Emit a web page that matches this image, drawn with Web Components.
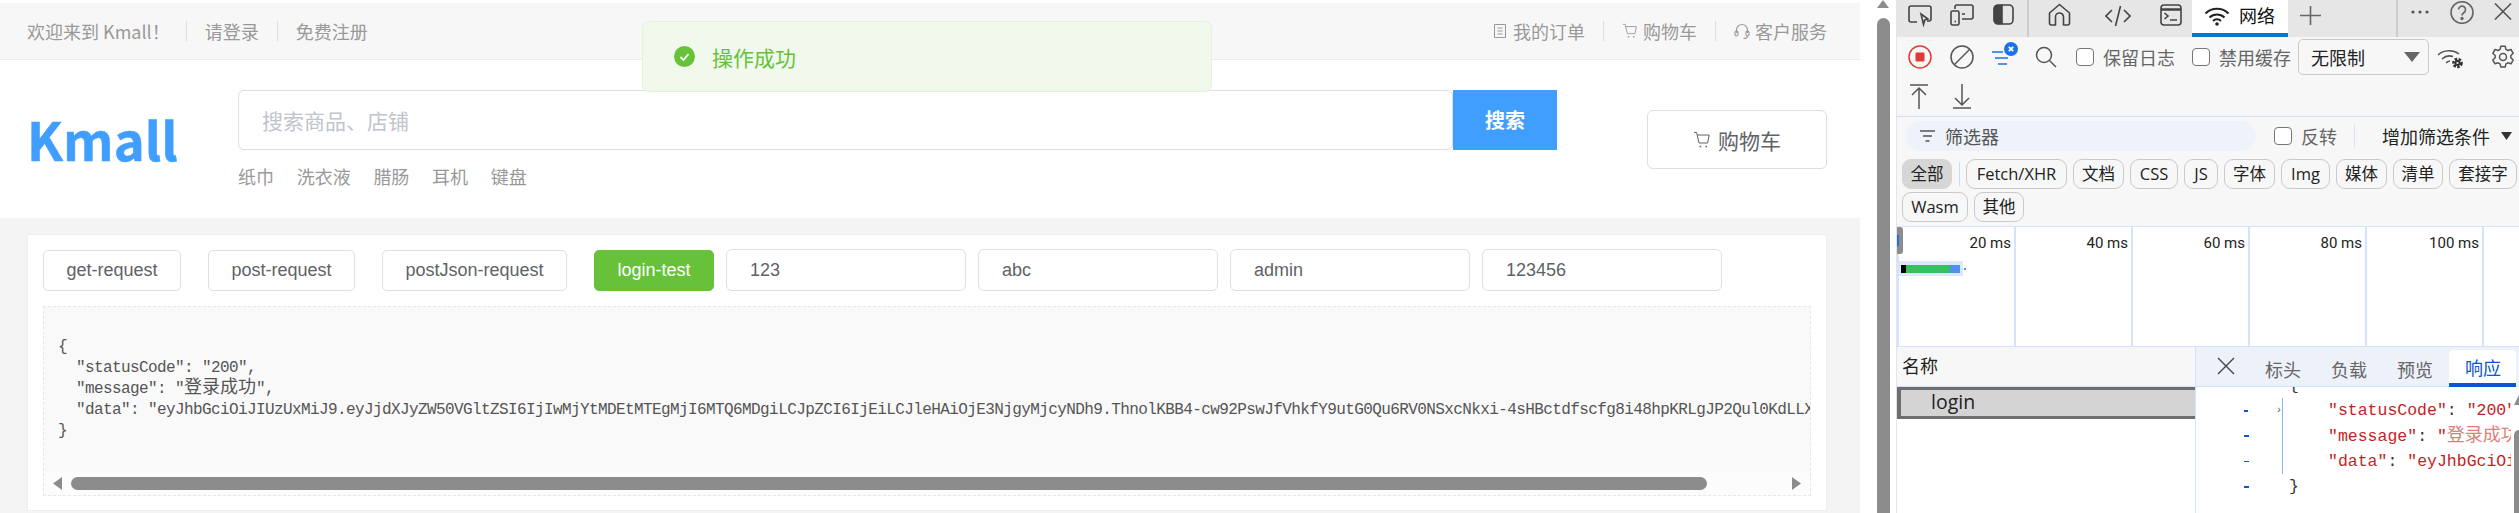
<!DOCTYPE html>
<html lang="zh">
<head>
<meta charset="utf-8">
<title>Kmall</title>
<style>
    html, body { margin: 0; height: 513px; overflow: hidden; background: #fff; }
    body { display: flex; font-family: "Noto Sans CJK SC", sans-serif; }
</style>
</head>
<body>
<mall-page>
    <mall-topbar></mall-topbar>
    <mall-header></mall-header>
    <api-panel></api-panel>
    <toast-message>操作成功</toast-message>
</mall-page>
<page-scrollbar></page-scrollbar>
<dev-tools>
    <dt-tabs></dt-tabs>
    <dt-toolbar></dt-toolbar>
    <dt-filter></dt-filter>
    <dt-timeline></dt-timeline>
    <dt-requests></dt-requests>
</dev-tools>

<script>
const CART = (w, h, c) => `<svg width="${w}" height="${h}" viewBox="0 0 18 18" fill="none" stroke="${c}" stroke-width="1"><path d="M1 1.5h2.6l2.4 10.5h8.6l1.6-8H4.2"/><path d="M6.6 15.5h1.6M12.4 15.5h1.6" stroke-width="1.6"/></svg>`;

class MallPage extends HTMLElement {
    constructor() {
        super();
        this.attachShadow({ mode: 'open' });
        this.shadowRoot.innerHTML = `
            <style>
                :host { display: flex; flex-direction: column; width: 1860px; height: 513px; position: relative; flex: none; padding-top: 3px; box-sizing: border-box; }
            </style>
            <slot></slot>
        `;
    }
}

class MallTopbar extends HTMLElement {
    constructor() {
        super();
        this.attachShadow({ mode: 'open' });
        this.shadowRoot.innerHTML = `
            <style>
                :host { display: flex; align-items: center; justify-content: space-between; height: 56px; padding: 0 33px 0 27px; background: #f7f7f7; border-bottom: 1px solid #ececec; color: #999; font-size: 18px; flex: none; }
                .group { display: flex; align-items: center; }
                .sep { width: 1px; height: 20px; background: #dcdcdc; margin: 0 18px; }
                .welcome { margin-right: -2px; }
                .item { display: flex; align-items: center; gap: 5px; }
                svg { display: block; }
            </style>
            <div class="group">
                <span class="welcome">欢迎来到 Kmall！</span>
                <i class="sep"></i><span>请登录</span>
                <i class="sep"></i><span>免费注册</span>
            </div>
            <div class="group">
                <span class="item">
                    <svg width="16" height="16" viewBox="0 0 16 16" fill="none" stroke="#999"><path d="M2.5 1.5h11v13h-11z"/><path d="M5.5 5h5M5.5 8h5M5.5 11h5"/></svg>
                    我的订单
                </span>
                <i class="sep"></i>
                <span class="item">${CART(16, 16, '#999')}购物车</span>
                <i class="sep"></i>
                <span class="item">
                    <svg width="16" height="17" viewBox="0 0 16 17" fill="none" stroke="#999" stroke-width="1.2"><path d="M2.5 10V7a5.5 5.5 0 0 1 11 0v3"/><rect x="1" y="8" width="3" height="5" rx="1.5"/><rect x="12" y="8" width="3" height="5" rx="1.5"/><path d="M13.5 13c0 1.5-2 2.5-4 2.5"/></svg>
                    客户服务
                </span>
            </div>
        `;
    }
}

class MallHeader extends HTMLElement {
    constructor() {
        super();
        this.attachShadow({ mode: 'open' });
        this.shadowRoot.innerHTML = `
            <style>
                :host { display: flex; align-items: flex-start; height: 158px; box-sizing: border-box; padding: 30px 33px 0 27px; background: #fff; flex: none; }
                .logo { width: 211px; font-size: 52.500px; font-weight: 700; -webkit-text-stroke: .5px #409eff; line-height: 60px; color: #409eff; padding-top: 18px; flex: none; }
                .search { width: 1319px; flex: none; }
                .box { display: flex; height: 60px; }
                .input { flex: 1; box-sizing: border-box; border: 1px solid #dcdfe6; border-radius: 6px; padding-left: 23px; font-size: 21px; line-height: 58px; color: #c0c4cc; }
                .go { width: 104px; background: #409eff; color: #fff; font-size: 20px; font-weight: 700; line-height: 60px; text-align: center; }
                .hot { display: flex; gap: 22.700px; margin-top: 13px; font-size: 18px; line-height: 26px; color: #999; }
                .cart { display: flex; align-items: center; justify-content: center; gap: 7px; width: 180px; height: 59px; box-sizing: border-box; margin: 20px 0 0 auto; border: 1px solid #dcdfe6; border-radius: 6px; color: #606266; font-size: 21px; }
            </style>
            <div class="logo">Kmall</div>
            <div class="search">
                <div class="box">
                    <div class="input">搜索商品、店铺</div>
                    <div class="go">搜索</div>
                </div>
                <div class="hot"><span>纸巾</span><span>洗衣液</span><span>腊肠</span><span>耳机</span><span>键盘</span></div>
            </div>
            <div class="cart">${CART(18, 18, '#606266')}<span>购物车</span></div>
        `;
    }
}

class ApiPanel extends HTMLElement {
    constructor() {
        super();
        this.attachShadow({ mode: 'open' });
        const token = 'eyJhbGciOiJIUzUxMiJ9.eyJjdXJyZW50VGltZSI6IjIwMjYtMDEtMTEgMjI6MTQ6MDgiLCJpZCI6IjEiLCJleHAiOjE3NjgyMjcyNDh9.ThnolKBB4-cw92PswJfVhkfY9utG0Qu6RV0NSxcNkxi-4sHBctdfscfg8i48hpKRLgJP2Qul0KdLLX';
        this.shadowRoot.innerHTML = `
            <style>
                :host { display: block; flex: 1; background: #f4f4f4; padding: 16px 33px 0 27px; }
                .card { box-sizing: border-box; height: 277px; padding: 14px 15px; background: #fff; border: 1px solid #eee; font-family: "Liberation Sans", "Noto Sans CJK SC", sans-serif; font-size: 18px; }
                .row { display: flex; align-items: center; height: 42px; }
                .btn { box-sizing: border-box; height: 41px; line-height: 39px; border: 1px solid #dcdfe6; border-radius: 5px; color: #606266; text-align: center; margin-right: 27px; }
                .btn.ok { background: #67c23a; border-color: #67c23a; color: #fff; margin-right: 12px; }
                .field { box-sizing: border-box; width: 240px; height: 42px; line-height: 40px; border: 1px solid #dcdfe6; border-radius: 6px; color: #606266; padding-left: 23px; margin-right: 12px; }
                .result { display: flex; flex-direction: column; box-sizing: border-box; height: 190px; margin-top: 15px; border: 1px dashed #e8e8e8; background: #f9f9f9; }
                pre { flex: 1; margin: 0; padding: 30px 0 0 14px; overflow: hidden; font-family: "Liberation Mono", "Noto Sans CJK SC", monospace; font-size: 16px; letter-spacing: -0.6px; line-height: 21px; color: #555; }
                pre b { font-family: "Noto Sans CJK SC", sans-serif; font-weight: 400; font-size: 18px; letter-spacing: 0; line-height: 0; }
                .bar { display: flex; align-items: center; height: 23px; background: #fcfcfc; color: #8c8c8c; padding: 0 9px; gap: 9px; }
                .thumb { width: 1636px; height: 13px; border-radius: 7px; background: #8c8c8c; }
                .end { margin-left: auto; }
                svg { display: block; flex: none; }
            </style>
            <div class="card">
                <div class="row">
                    <div class="btn" style="width:138px">get-request</div>
                    <div class="btn" style="width:147px">post-request</div>
                    <div class="btn" style="width:185px">postJson-request</div>
                    <div class="btn ok" style="width:120px">login-test</div>
                    <div class="field">123</div>
                    <div class="field">abc</div>
                    <div class="field">admin</div>
                    <div class="field">123456</div>
                </div>
                <div class="result">
<pre>{
  "statusCode": "200",
  "message": "<b>登录成功</b>",
  "data": "${token}
}</pre>
                    <div class="bar">
                        <svg width="9" height="13" viewBox="0 0 9 13" fill="#8c8c8c"><path d="M9 0v13L0 6.5z"/></svg>
                        <div class="thumb"></div>
                        <svg class="end" width="9" height="13" viewBox="0 0 9 13" fill="#8c8c8c"><path d="M0 0v13l9-6.5z"/></svg>
                    </div>
                </div>
            </div>
        `;
    }
}

class ToastMessage extends HTMLElement {
    constructor() {
        super();
        this.attachShadow({ mode: 'open' });
        this.shadowRoot.innerHTML = `
            <style>
                :host { position: absolute; left: 642px; top: 21px; width: 570px; height: 71px; box-sizing: border-box; display: flex; align-items: center; gap: 17px; padding-left: 31px; background: #f0f9eb; border: 1px solid #e1f3d8; border-radius: 7px; color: #67c23a; font-size: 21px; }
                svg { display: block; }
            </style>
            <svg width="21" height="21" viewBox="0 0 21 21"><circle cx="10.5" cy="10.5" r="10.5" fill="#67c23a"/><path d="M6.5 11l3 3 5-6" fill="none" stroke="#fff" stroke-width="1.8"/></svg>
            <slot></slot>
        `;
    }
}

class PageScrollbar extends HTMLElement {
    constructor() {
        super();
        this.attachShadow({ mode: 'open' });
        this.shadowRoot.innerHTML = `
            <style>
                :host { display: block; box-sizing: border-box; width: 36px; height: 513px; padding-left: 17px; flex: none; background: #fff; }
                .up { width: 0; height: 0; border: 6px solid transparent; border-top: 0; border-bottom: 8px solid #8c8c8c; margin-bottom: 10px; }
                .thumb { width: 13px; height: 495px; background: #8c8c8c; border-radius: 7px 7px 0 0; }
            </style>
            <div class="up"></div>
            <div class="thumb"></div>
        `;
    }
}

class DevTools extends HTMLElement {
    constructor() {
        super();
        this.attachShadow({ mode: 'open' });
        this.shadowRoot.innerHTML = `
            <style>
                :host { display: flex; flex-direction: column; width: 623px; height: 513px; box-sizing: border-box; border-left: 1px solid #e4e4e4; background: #f7f7f7; flex: none; overflow: hidden; font-family: "Open Sans", "Noto Sans CJK SC", sans-serif; font-size: 18px; color: #1f1f1f; }
            </style>
            <slot></slot>
        `;
    }
}

class DtTabs extends HTMLElement {
    constructor() {
        super();
        this.attachShadow({ mode: 'open' });
        this.shadowRoot.innerHTML = `
            <style>
                :host { display: flex; align-items: flex-start; height: 37px; background: #e6e6e6; flex: none; overflow: hidden; }
                svg { display: block; flex: none; fill: none; stroke: #444; stroke-width: 1.6; }
                .sep { width: 2px; height: 37px; background: #ccc; flex: none; }
                .active { display: flex; align-items: center; gap: 9px; box-sizing: border-box; width: 96px; height: 37px; margin-left: 10px; padding: 0 0 0 12px; background: #fff; border-bottom: 4px solid #0078d4; color: #111; line-height: 33px; flex: none; }
                .active svg { stroke: #222; stroke-width: 2; }
            </style>
            <svg style="margin:5px 0 0 11px" width="24" height="22" viewBox="0 0 24 22"><path d="M9 17H3a2 2 0 0 1-2-2V3a2 2 0 0 1 2-2h18a2 2 0 0 1 2 2v11a2 2 0 0 1-2 2h-2"/><path d="M13 9l7 5-3.200 1-1.300 4.500z"/></svg>
            <svg style="margin:4px 0 0 18px" width="24" height="22" viewBox="0 0 24 22"><rect x="1" y="7" width="8" height="14" rx="1.500"/><path d="M4.500 17.500h1.500"/><path d="M5 5V3a2 2 0 0 1 2-2h14a2 2 0 0 1 2 2v10a2 2 0 0 1-2 2h-9M12 10h3"/></svg>
            <svg style="margin:4px 0 0 19px" width="21" height="21" viewBox="0 0 21 21"><path d="M5 1h11a4 4 0 0 1 4 4v11a4 4 0 0 1-4 4H5a4 4 0 0 1-4-4V5a4 4 0 0 1 4-4z"/><path d="M5 1.500h4v18H5a3.500 3.500 0 0 1-3.500-3.500V5A3.500 3.500 0 0 1 5 1.500z" fill="#444"/></svg>
            <i class="sep" style="margin-left:13px"></i>
            <svg style="margin:3px 0 0 19px" width="23" height="23" viewBox="0 0 23 23"><path d="M1.500 10L11.500 1.500 21.500 10v10a2 2 0 0 1-2 2h-4v-8a3.500 3.500 0 0 0-8 0v8h-4a2 2 0 0 1-2-2z" stroke-linejoin="round"/></svg>
            <svg style="margin:5px 0 0 34px" width="26" height="22" viewBox="0 0 26 22"><path d="M7 5L1 11l6 6M19 5l6 6-6 6M15.500 1l-5 20"/></svg>
            <svg style="margin:4px 0 0 29px" width="22" height="22" viewBox="0 0 22 22"><rect x="1" y="1" width="20" height="20" rx="3"/><path d="M1 5.500h20" stroke-width="2.500"/><path d="M4.500 9l3.500 3-3.500 3M10 16h7"/></svg>
            <div class="active">
                <svg width="26" height="19" viewBox="0 0 26 19"><path d="M1.500 6.500a16.500 16.500 0 0 1 23 0M5.500 10.500a11 11 0 0 1 15 0M9 14a5.500 5.500 0 0 1 8 0"/><circle cx="13" cy="17" r="1.800" fill="#222" stroke="none"/></svg>
                <span>网络</span>
            </div>
            <svg style="margin:6px 0 0 12px;stroke:#666" width="21" height="19" viewBox="0 0 21 19" stroke-width="1.600"><path d="M10.500 0v19M0 9.500h21"/></svg>
            <i class="sep" style="margin-left:75px"></i>
            <svg style="margin:10px 0 0 13px" width="18" height="4" viewBox="0 0 18 4"><g fill="#555" stroke="none"><circle cx="2" cy="2" r="1.600"/><circle cx="9" cy="2" r="1.600"/><circle cx="16" cy="2" r="1.600"/></g></svg>
            <svg style="margin:1px 0 0 21px;stroke:#666" width="24" height="23" viewBox="0 0 24 23" stroke-width="1.300"><ellipse cx="12" cy="11.500" rx="11" ry="10.800"/><path d="M8.500 8.500a3.500 3.500 0 1 1 5.500 3c-1.400 1-2 1.500-2 3"/><circle cx="12" cy="17.500" r=".9" fill="#666"/></svg>
            <svg style="margin:3px 0 0 20px;stroke:#555" width="18" height="17" viewBox="0 0 18 17" stroke-width="1.400"><path d="M1 .5l16 16M17 .5L1 16.500"/></svg>
        `;
    }
}

class DtCheck extends HTMLElement {
    constructor() {
        super();
        this.attachShadow({ mode: 'open' });
        this.shadowRoot.innerHTML = `
            <style>
                :host { display: flex; align-items: center; gap: 9px; color: #666; }
                i { display: block; box-sizing: border-box; width: 18px; height: 18px; border: 1px solid #767676; border-radius: 4px; background: #fff; }
            </style>
            <i></i><slot></slot>
        `;
    }
}

class DtToolbar extends HTMLElement {
    constructor() {
        super();
        this.attachShadow({ mode: 'open' });
        this.shadowRoot.innerHTML = `
            <style>
                :host { display: block; height: 80px; box-sizing: border-box; border-bottom: 1px solid #cfe0fb; flex: none; }
                .row { display: flex; align-items: center; }
                .one { height: 40px; }
                .two { height: 38px; }
                svg { display: block; flex: none; fill: none; stroke: #555; stroke-width: 1.500; }
                .select { display: flex; align-items: center; box-sizing: border-box; width: 131px; height: 36px; margin-left: 7px; padding: 0 8px 0 12px; border: 1px solid #c8c8c8; border-radius: 5px; color: #222; flex: none; }
                .select svg { margin-left: auto; stroke: none; fill: #666; }
            </style>
            <div class="row one">
                <svg style="margin-left:11px;stroke:#e03c36" width="24" height="24" viewBox="0 0 24 24"><circle cx="12" cy="12" r="11"/><rect x="7.500" y="7.500" width="9" height="9" rx="1" fill="#e03c36" stroke="none"/></svg>
                <svg style="margin-left:18px" width="24" height="24" viewBox="0 0 24 24"><circle cx="12" cy="12" r="11"/><path d="M4.500 19.500l15-15"/></svg>
                <svg style="margin-left:18px;margin-top:-4px" width="26" height="26" viewBox="0 0 26 26" stroke-width="1.500"><path d="M0 10h11M3 16h13M6 22h9" stroke="#1a73e8"/><circle cx="19" cy="7" r="7" fill="#1a73e8" stroke="none"/><path d="M16.800 4.800l4.400 4.400M21.200 4.800l-4.400 4.400" stroke="#fff" stroke-width="1.800"/></svg>
                <svg style="margin-left:17px" width="22" height="22" viewBox="0 0 22 22"><circle cx="9" cy="9" r="7.500"/><path d="M14.500 14.500l6.500 6.500"/></svg>
                <dt-check style="margin-left:19px">保留日志</dt-check>
                <dt-check style="margin-left:17px">禁用缓存</dt-check>
                <div class="select">无限制<svg width="16" height="10" viewBox="0 0 16 10"><path d="M0 0h16L8 10z"/></svg></div>
                <svg style="margin-left:8px;margin-top:2px" width="27" height="22" viewBox="0 0 27 22"><path d="M1 8a17 17 0 0 1 21-1M5 12a11 11 0 0 1 11-2.500M9 16a5.500 5.500 0 0 1 4-2"/><circle cx="20.500" cy="16" r="3.800" stroke="#333" stroke-width="3" stroke-dasharray="2.400 1.300"/><circle cx="20.500" cy="16" r="3" fill="#333" stroke="none"/><circle cx="20.500" cy="16" r="1.100" fill="#f7f7f7" stroke="none"/></svg>
                <svg style="margin-left:27px" width="24" height="24" viewBox="0 0 24 24"><path d="M9.800 1.200h4.400l.7 3.200 2 1.100 3.100-1 2.200 3.800-2.400 2.200v2.300l2.400 2.200-2.200 3.800-3.100-1-2 1.100-.7 3.200H9.800l-.7-3.200-2-1.100-3.100 1-2.200-3.800 2.400-2.200v-2.300L1.800 8.300 4 4.500l3.100 1 2-1.100z" stroke-linejoin="round"/><circle cx="12" cy="12" r="3.500"/></svg>
            </div>
            <div class="row two">
                <svg style="margin:0 0 0 13px" width="18" height="25" viewBox="0 0 18 25"><path d="M0 1h18M9 25V4M2 11l7-7 7 7"/></svg>
                <svg style="margin:0 0 0 25px" width="18" height="25" viewBox="0 0 18 25"><path d="M9 0v21M2 14l7 7 7-7M0 24h18"/></svg>
            </div>
        `;
    }
}

class DtChip extends HTMLElement {
    constructor() {
        super();
        this.attachShadow({ mode: 'open' });
        this.shadowRoot.innerHTML = `
            <style>
                :host { display: block; box-sizing: border-box; height: 30px; line-height: 27px; border: 1px solid #c9c9c9; border-radius: 9px; font-size: 16.500px; color: #222; text-align: center; white-space: nowrap; }
                :host([selected]) { background: #d6d6d6; border-color: #d6d6d6; }
            </style>
            <slot></slot>
        `;
    }
}

class DtFilter extends HTMLElement {
    constructor() {
        super();
        this.attachShadow({ mode: 'open' });
        this.shadowRoot.innerHTML = `
            <style>
                :host { display: block; height: 109px; flex: none; box-sizing: border-box; padding: 4px 0 0 0; }
                .top { display: flex; align-items: center; height: 30px; }
                .pill { display: flex; align-items: center; gap: 10px; box-sizing: border-box; width: 351px; height: 30px; margin-left: 8px; padding-left: 15px; border-radius: 15px; background: #eef3fb; color: #555; flex: none; }
                svg { display: block; flex: none; }
                .v { width: 1px; height: 24px; background: #d8e2f0; margin: 0 27px 0 17px; }
                .more { color: #222; }
                .arrow { margin-left: 11px; }
                .chips { display: flex; flex-wrap: wrap; gap: 3px 6px; margin: 8px 0 0 5px; width: 630px; }
                .cut { width: 1px; height: 24px; margin: 3px 0 0 1px; background: #c9dcf7; }
            </style>
            <div class="top">
                <div class="pill">
                    <svg width="15" height="12" viewBox="0 0 15 12" fill="none" stroke="#555" stroke-width="1.600"><path d="M0 1h15M3 6h9M5.500 11h4"/></svg>
                    筛选器
                </div>
                <dt-check style="margin-left:18px">反转</dt-check>
                <i class="v"></i>
                <span class="more">增加筛选条件</span>
                <svg class="arrow" width="11" height="8" viewBox="0 0 11 8" fill="#333"><path d="M0 0h11L5.500 8z"/></svg>
            </div>
            <div class="chips">
                <dt-chip selected style="width:50px">全部</dt-chip>
                <i class="cut"></i>
                <dt-chip style="width:101px">Fetch/XHR</dt-chip>
                <dt-chip style="width:51px">文档</dt-chip>
                <dt-chip style="width:48px">CSS</dt-chip>
                <dt-chip style="width:34px">JS</dt-chip>
                <dt-chip style="width:51px">字体</dt-chip>
                <dt-chip style="width:49px">Img</dt-chip>
                <dt-chip style="width:51px">媒体</dt-chip>
                <dt-chip style="width:50px">清单</dt-chip>
                <dt-chip style="width:68px">套接字</dt-chip>
                <dt-chip style="width:66px">Wasm</dt-chip>
                <dt-chip style="width:50px">其他</dt-chip>
            </div>
        `;
    }
}

class DtTimeline extends HTMLElement {
    constructor() {
        super();
        this.attachShadow({ mode: 'open' });
        const cells = ['20 ms', '40 ms', '60 ms', '80 ms', '100 ms', ''];
        this.shadowRoot.innerHTML = `
            <style>
                :host { display: flex; position: relative; height: 121px; box-sizing: border-box; flex: none; background: #fff; border-top: 1px solid #d3e3fb; border-bottom: 1px solid #d3e3fb; border-left: 2px solid #d3e3fb; }
                .cell { box-sizing: border-box; width: 117px; flex: none; border-right: 2px solid #d3e3fb; padding: 5px 3px 0 0; text-align: right; font-family: Roboto, sans-serif; font-size: 15px; line-height: 22px; color: #222; }
                .cell:first-child { width: 116px; }
                .handle { position: absolute; left: -2px; top: 0; width: 6px; height: 27px; background: #8c8c8c; border-radius: 0 3px 3px 0; }
                .handle::after { content: ""; display: block; width: 2px; height: 11px; background: #1a73e8; transform: translateY(8px); }
                .wave { position: absolute; left: 0; top: 34px; display: flex; align-items: center; width: 64px; height: 15px; box-sizing: border-box; padding-left: 2px; background: #dce8fb; }
                .wave i { display: block; height: 8px; }
                .dot { position: absolute; left: 65px; top: 41px; width: 2px; height: 2px; background: #4f8ff7; }
            </style>
            ${cells.map(c => `<div class="cell">${c}</div>`).join('')}
            <div class="handle"></div>
            <div class="wave">
                <i style="width:5px;background:#000"></i>
                <i style="width:44px;background:#36c05f"></i>
                <i style="width:10px;background:#4f8ff7"></i>
            </div>
            <div class="dot"></div>
        `;
    }
}

class DtRequests extends HTMLElement {
    constructor() {
        super();
        this.attachShadow({ mode: 'open' });
        this.shadowRoot.innerHTML = `
            <style>
                :host { display: flex; flex: 1; min-height: 0; background: #fff; }
                .names { width: 298px; flex: none; }
                .head { box-sizing: border-box; height: 40px; padding: 0 0 0 5px; line-height: 38px; background: #f7f7f7; border-bottom: 1px solid #d3e3fb; color: #222; }
                .sel { box-sizing: border-box; height: 32px; padding-left: 30px; background: #d4d4d4; border: solid #6e6e6e; border-width: 3px 0 3px 4px; font-size: 19.500px; line-height: 24px; color: #222; }
                .detail { flex: 1; min-width: 0; display: flex; flex-direction: column; border-left: 1px solid #d3e3fb; }
                .tabs { display: flex; align-items: flex-end; box-sizing: border-box; height: 40px; background: #edf1fa; border-bottom: 1px solid #d3e3fb; color: #666; flex: none; }
                .tabs svg { align-self: flex-start; margin: 10px 30px 0 21px; flex: none; }
                .tab { width: 36px; margin-right: 30px; line-height: 32px; white-space: nowrap; flex: none; }
                .tab.on { box-sizing: border-box; width: 67px; height: 37px; margin: 0 0 -1px -14px; padding-left: 16px; line-height: 36px; background: #fff; color: #0b57d0; border-bottom: 4px solid #0b57d0; border-radius: 4px 4px 0 0; }
                .body { flex: 1; display: flex; min-height: 0; overflow: hidden; }
                .code { flex: 1; min-width: 0; overflow: hidden; margin-top: -14px; font-family: "Liberation Mono", "Noto Sans CJK SC", monospace; font-size: 16.500px; color: #c5221f; }
                .line { display: flex; height: 25.300px; line-height: 25px; white-space: nowrap; }
                .g { display: flex; align-items: center; width: 86px; flex: none; color: #0b57d0; }
                .g i { display: block; width: 5px; height: 1.500px; margin-left: 48px; background: #0b57d0; }
                .g u { font-size: 10px; color: #555; margin-left: 28px; text-decoration: none; }
                .c { padding-left: 45px; border-left: 1px solid #8ab4f8; }
                .c.top { padding-left: 7px; border: 0; color: #333; }
                .c em { font-style: normal; color: #333; }
                .c b { font-family: "Noto Sans CJK SC", sans-serif; font-weight: 400; color: #dc7f7b; font-size: 18px; line-height: 0; }
                .bar { box-sizing: border-box; width: 8px; padding-left: 3px; flex: none; background: #fff; overflow: hidden; }
                .bar .tri { width: 0; height: 0; margin: 8px 0 25px; border: 5px solid transparent; border-top: 0; border-bottom: 10px solid #8c8c8c; }
                .bar .th { height: 200px; background: #8c8c8c; border-radius: 6px 0 0 0; }
            </style>
            <div class="names">
                <div class="head">名称</div>
                <div class="sel">login</div>
            </div>
            <div class="detail">
                <div class="tabs">
                    <svg width="18" height="18" viewBox="0 0 18 18" fill="none" stroke="#444" stroke-width="1.400"><path d="M1 1l16 16M17 1L1 17"/></svg>
                    <span class="tab">标头</span>
                    <span class="tab">负载</span>
                    <span class="tab">预览</span>
                    <span class="tab on">响应</span>
                </div>
                <div class="body">
                    <div class="code">
                        <div class="line"><div class="g"><i></i></div><div class="c top">{</div></div>
                        <div class="line"><div class="g"><i></i><u>›</u></div><div class="c">"statusCode"<em>:</em> "200",</div></div>
                        <div class="line"><div class="g"><i></i></div><div class="c">"message"<em>:</em> "<b>登录成功</b>",</div></div>
                        <div class="line"><div class="g"><i></i></div><div class="c">"data"<em>:</em> "eyJhbGciOiJIUzUxMiJ9</div></div>
                        <div class="line"><div class="g"><i></i></div><div class="c top">}</div></div>
                    </div>
                    <div class="bar"><div class="tri"></div><div class="th"></div></div>
                </div>
            </div>
        `;
    }
}

customElements.define('mall-page', MallPage);
customElements.define('mall-topbar', MallTopbar);
customElements.define('mall-header', MallHeader);
customElements.define('api-panel', ApiPanel);
customElements.define('toast-message', ToastMessage);
customElements.define('page-scrollbar', PageScrollbar);
customElements.define('dev-tools', DevTools);
customElements.define('dt-tabs', DtTabs);
customElements.define('dt-check', DtCheck);
customElements.define('dt-toolbar', DtToolbar);
customElements.define('dt-chip', DtChip);
customElements.define('dt-filter', DtFilter);
customElements.define('dt-timeline', DtTimeline);
customElements.define('dt-requests', DtRequests);
</script>
</body>
</html>
